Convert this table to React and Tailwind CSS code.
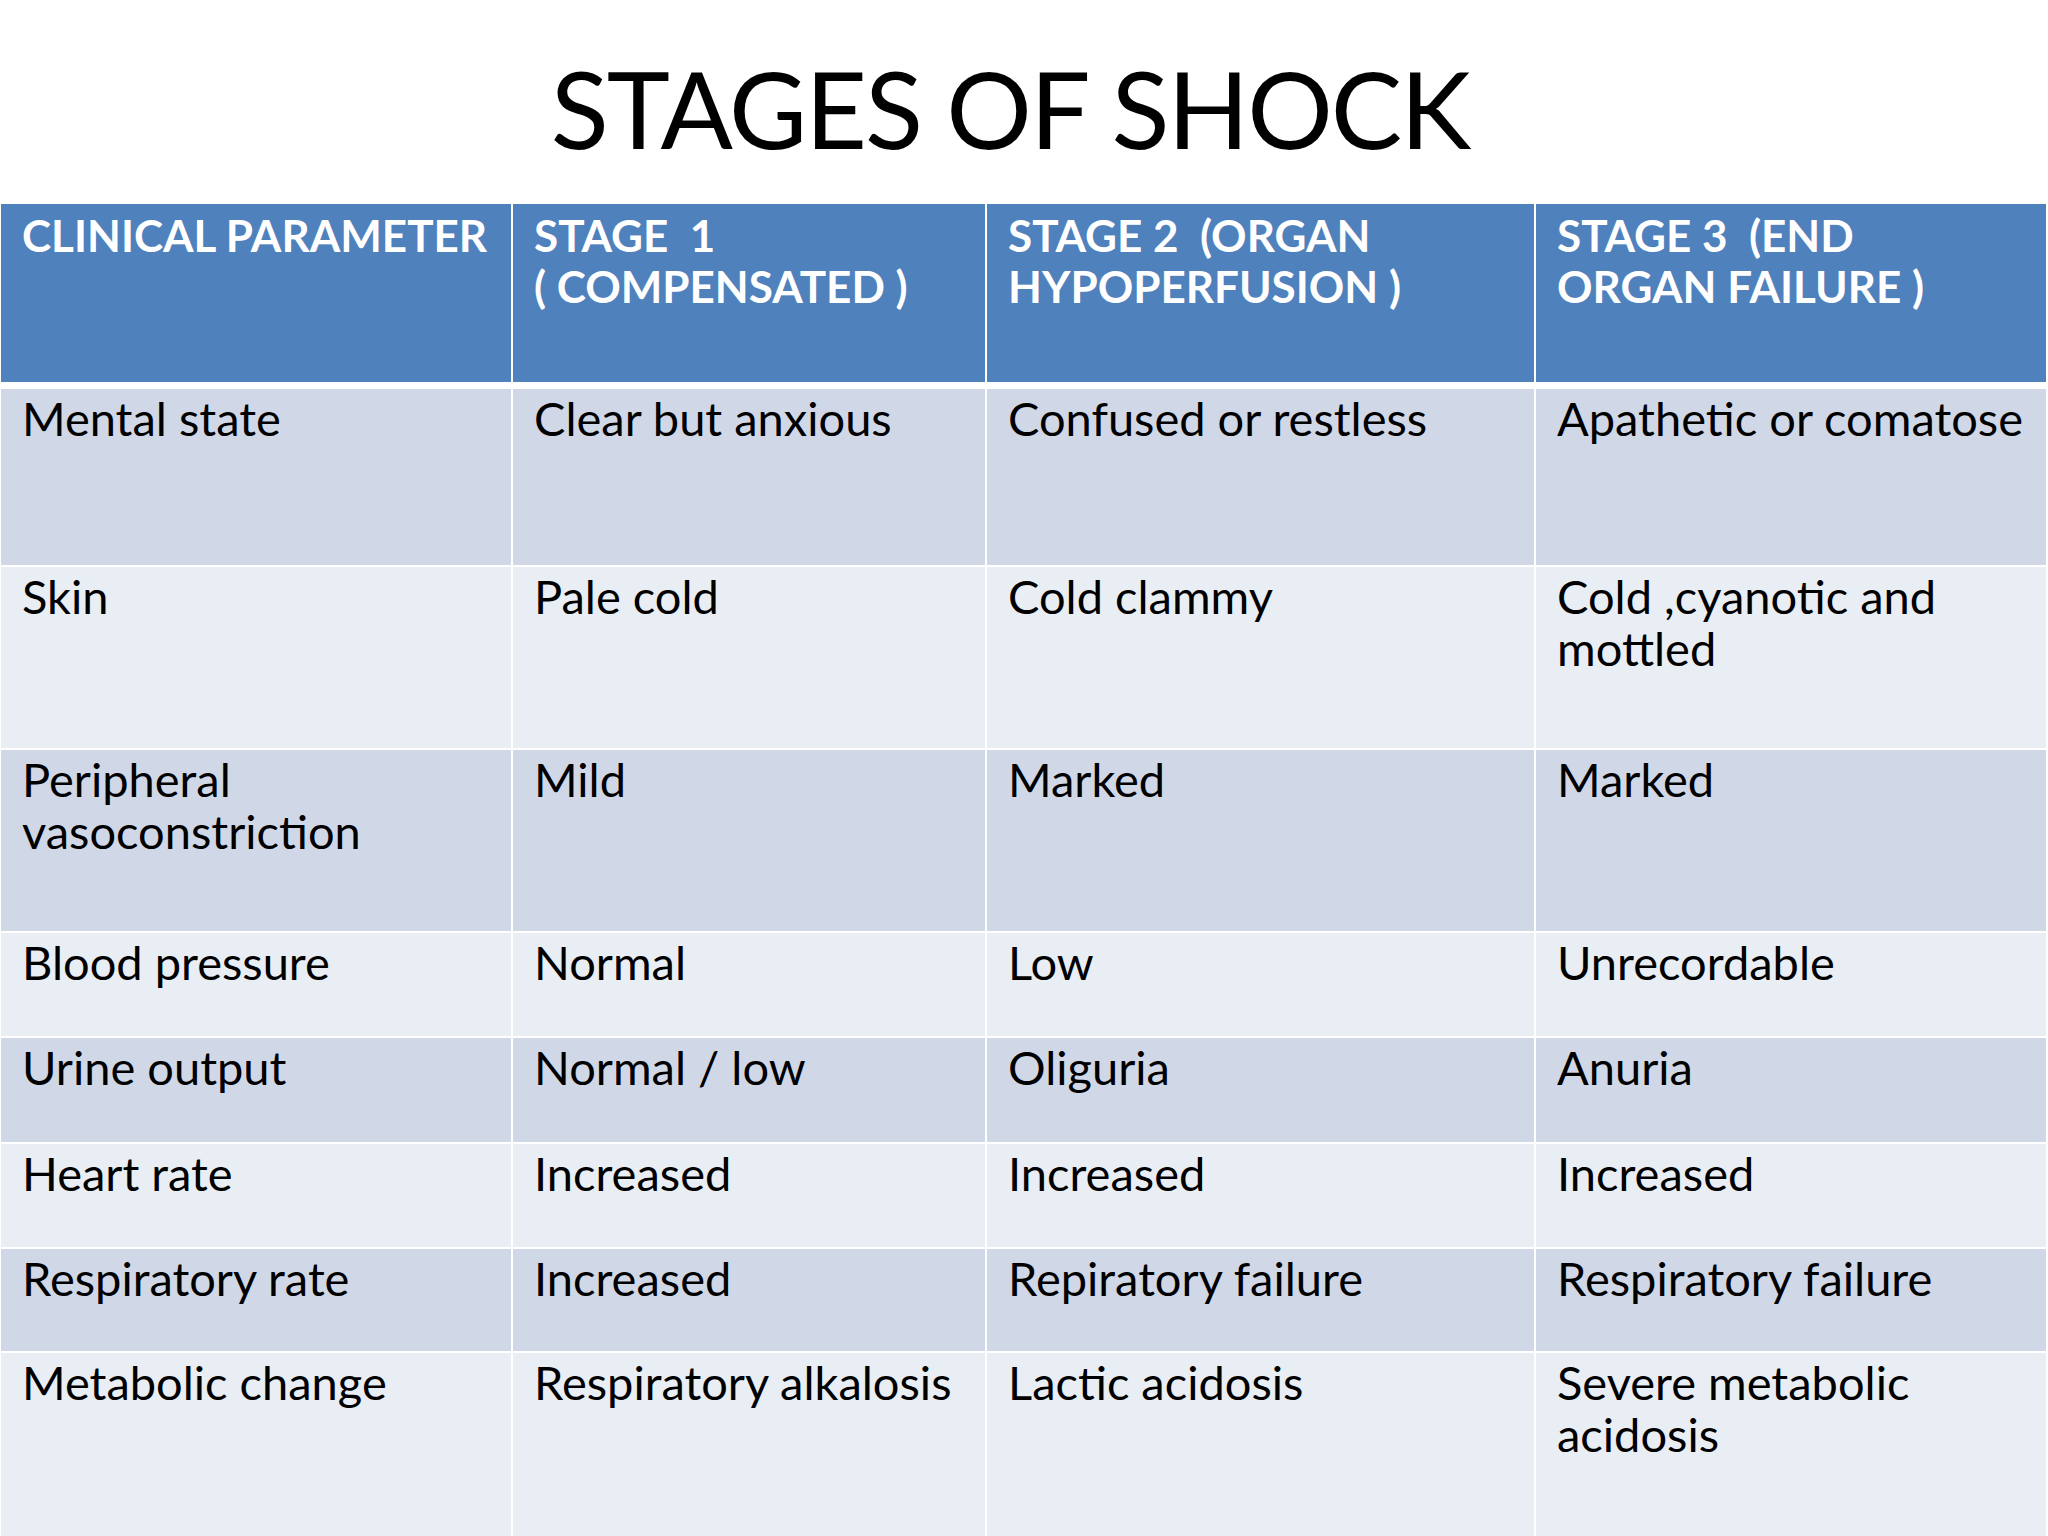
import React from 'react';

const HEADERS = [
  'CLINICAL PARAMETER',
  'STAGE  1\n( COMPENSATED )',
  'STAGE 2  (ORGAN\nHYPOPERFUSION )',
  'STAGE 3  (END\nORGAN FAILURE )',
];

const ROWS = [
  ['Mental state', 'Clear but anxious', 'Confused or restless', 'Apathetic or comatose'],
  ['Skin', 'Pale cold', 'Cold clammy', 'Cold ,cyanotic and\nmottled'],
  ['Peripheral\nvasoconstriction', 'Mild', 'Marked', 'Marked'],
  ['Blood pressure', 'Normal', 'Low', 'Unrecordable'],
  ['Urine output', 'Normal / low', 'Oliguria', 'Anuria'],
  ['Heart rate', 'Increased', 'Increased', 'Increased'],
  ['Respiratory rate', 'Increased', 'Repiratory failure', 'Respiratory failure'],
  ['Metabolic change', 'Respiratory alkalosis', 'Lactic acidosis', 'Severe metabolic\nacidosis'],
];

const App = () => {
  return (
    <div className="w-[2048px] h-[1536px] bg-white overflow-hidden font-[Lato,sans-serif] text-black">
      {/* Title */}
      <div className="h-[204px] pt-[54px] text-center">
        <h1 className="text-[107px] leading-[107px] font-normal tracking-[-2px] pr-[28px]">STAGES OF SHOCK</h1>
      </div>

      {/* Header row */}
      <div className="grid grid-cols-[510px_472px_547px_510px] gap-x-[2px] pl-[1px] h-[178px]">
        {HEADERS.map((h, i) => (
          <div
            key={i}
            className="bg-[#4f81bd] text-white font-bold text-[44px] leading-[51px] pt-[6px] pl-[21px] pr-2 whitespace-pre-wrap"
          >
            {h}
          </div>
        ))}
      </div>

      {/* Body rows */}
      <div className="mt-[7px] grid grid-cols-[510px_472px_547px_510px] grid-rows-[176px_181px_181px_103px_104px_103px_102px_183px] gap-[2px] pl-[1px]">
        {ROWS.map((row, r) =>
          row.map((cell, c) => (
            <div
              key={`${r}-${c}`}
              className={`${r % 2 === 0 ? 'bg-[#d0d8e8]' : 'bg-[#e9edf4]'} text-[47px] leading-[52px] pt-[3px] pl-[21px] pr-1 whitespace-pre-wrap`}
            >
              {cell}
            </div>
          ))
        )}
      </div>
    </div>
  );
};

export default App;
